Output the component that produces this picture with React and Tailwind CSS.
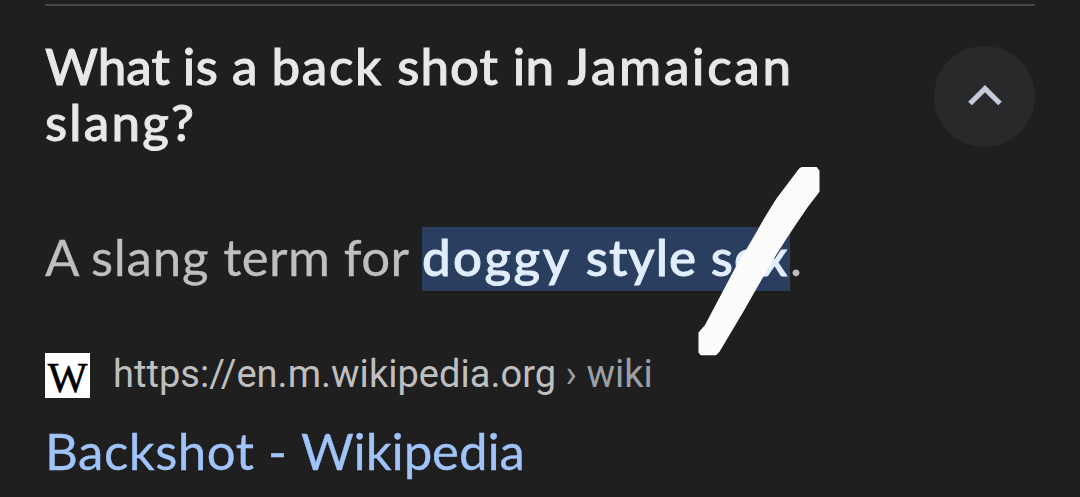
import React, { useState } from "react";

const Chevron = ({ open }) => (
  <svg
    viewBox="0 0 36 24"
    className={open ? "w-9 h-6 mb-[3px]" : "w-9 h-6 mb-[3px] rotate-180"}
    fill="none"
    stroke="#c8c8dc"
    strokeWidth="5.2"
  >
    <path d="M3 20.5 L18 5.7 L33 20.5" />
  </svg>
);

const Strike = () => (
  <svg
    viewBox="0 0 122 190"
    className="absolute left-[698px] top-[166px] w-[122px] h-[190px]"
    fill="#fcfcfc"
  >
    <path d="M104 1 Q102 1 100 4 L78.7 32.3 Q66 52 58.7 65.7 L37 102.3 L7 159 L0.5 166.5 V186.5 L2.7 189.3 H18 L21.5 185.7 L45.3 145.7 L72 99 Q86 76 98.7 57.3 Q109 41 121.5 25.7 V4.7 L118.7 1 Z" />
  </svg>
);

const App = () => {
  const [open, setOpen] = useState(true);

  return (
    <div className="relative h-[497px] overflow-hidden bg-[#1f1f1f] px-[45px] pt-1 font-['Lato',sans-serif]">
      <div className="h-0.5 bg-[#474747]" />

      <div className="flex justify-between items-start pt-8">
        <h2 className="text-[51px] leading-[56px] font-medium text-[#e8e8e8] whitespace-pre [-webkit-text-stroke:0.9px_#e8e8e8]">
          <span className="block">
            <span>What </span>
            <span className="tracking-[0.6px]">is a </span>
            <span className="tracking-[1.6px]">back </span>
            <span className="tracking-[1px]">shot </span>
            <span className="tracking-[0.3px]">in </span>
            <span className="tracking-[2.7px]">Jamaican</span>
          </span>
          <span className="block tracking-[2.2px]">slang?</span>
        </h2>
        <button
          type="button"
          onClick={() => setOpen(!open)}
          className="mt-2 w-[101px] h-[101px] rounded-full bg-[#28292a] flex items-center justify-center"
        >
          <Chevron open={open} />
        </button>
      </div>

      {open && (
        <>
          <p className="mt-[77px] h-16 flex text-[51px] leading-[59px] text-[#bfbfbf] whitespace-pre [-webkit-text-stroke:0.3px_#bfbfbf]">
            <span>A </span>
            <span className="tracking-[0.8px]">slang </span>
            <span className="tracking-[0.4px]">term for </span>
            <mark className="w-[368px] bg-[#2a3f60] text-[#e2eeff] font-medium [-webkit-text-stroke:0.9px_#e2eeff]">
              <span className="tracking-[2.5px]">doggy </span>
              <span className="tracking-[1px]">style sex</span>
            </mark>
            <span>.</span>
          </p>

          <div className="mt-[61px] flex items-center h-[46px]">
            <span className="w-[45px] h-[45px] pt-[5px] bg-white text-black flex items-center justify-center font-['Liberation_Serif',serif] text-[42px] leading-none [-webkit-text-stroke:0.6px_#000]">
              W
            </span>
            <p className="ml-[23px] mb-0.5 font-['Roboto',sans-serif] text-[38px] leading-[46px] tracking-[0.03px] text-[#bfbfbf] whitespace-pre">
              <span>https://en.m.wikipedia.org</span>
              <span className="text-[#9aa0a6]"> › wiki</span>
            </p>
          </div>

          <a
            href="#wiki"
            className="mt-[21px] block text-[51px] leading-[64px] text-[#a0c3fa] whitespace-pre [-webkit-text-stroke:0.3px_#a0c3fa]"
          >
            <span className="tracking-[0.5px]">Backshot - </span>
            <span className="tracking-[-0.1px]">Wikipedia</span>
          </a>
        </>
      )}

      <Strike />
    </div>
  );
};

export default App;
